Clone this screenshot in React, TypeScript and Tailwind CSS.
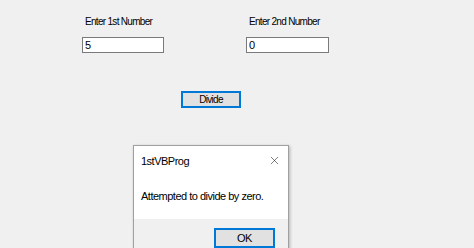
import { X } from 'lucide-react';

const font = { fontFamily: '"Liberation Sans", Arial, sans-serif' };

export default function App() {
  return (
    <div
      className="relative w-[474px] h-[248px] overflow-hidden bg-[#f0f0f0] text-[#000] text-[10px] tracking-[-0.7px]"
      style={font}
    >
      {/* form */}
      <div className="flex pt-[14px] pl-[82px] gap-[82px]">
        <div className="flex flex-col w-[82px]">
          <span className="pl-[3px] leading-[16px] whitespace-nowrap">Enter 1st Number</span>
          <input
            readOnly
            value="5"
            className="mt-[7px] h-[16px] w-[82px] border border-[#7a7a7a] bg-white px-[2px] text-[11px] leading-[14px] outline-none"
          />
        </div>
        <div className="flex flex-col w-[83px]">
          <span className="pl-[3px] leading-[16px] whitespace-nowrap">Enter 2nd Number</span>
          <input
            readOnly
            value="0"
            className="mt-[7px] h-[16px] w-[83px] border border-[#7a7a7a] bg-white px-[2px] text-[11px] leading-[14px] outline-none"
          />
        </div>
      </div>
      <div className="pl-[181px] pt-[38px]">
        <button className="w-[60px] h-[17px] border-2 border-[#0078d7] bg-[#e1e1e1] text-[10px] leading-[13px]">
          Divide
        </button>
      </div>

      {/* message box */}
      <div className="absolute left-[133px] top-[145px] w-[156px] h-[110px] border border-[#a0a0a0] bg-white shadow-[1px_1px_3px_rgba(0,0,0,0.25)] flex flex-col text-[11px] tracking-[-0.5px]">
        <div className="flex items-center justify-between pl-[7px] pr-[7px] pt-[7px] h-[22px]">
          <span className="leading-[14px]">1stVBProg</span>
          <X size={13} strokeWidth={1} className="text-[#111]" />
        </div>
        <div className="pl-[7px] pt-[21px] leading-[14px] whitespace-nowrap">Attempted to divide by zero.</div>
        <div className="mt-[16px] flex-1 bg-[#f0f0f0] flex justify-end pr-[13px] pt-[9px]">
          <button className="w-[61px] h-[20px] border-2 border-[#0078d7] bg-[#e1e1e1] text-[11px] leading-[14px]">
            OK
          </button>
        </div>
      </div>
    </div>
  );
}
